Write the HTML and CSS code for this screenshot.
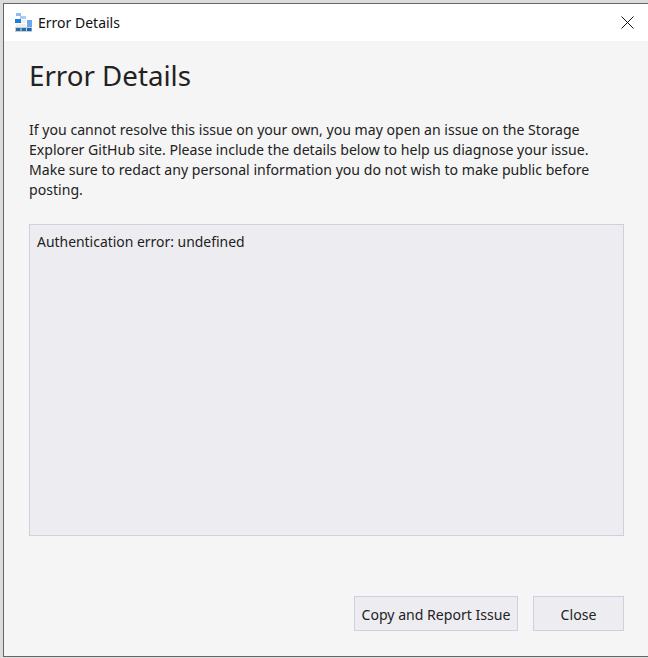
FILE: index.html
```html
<!DOCTYPE html>
<html lang="en">
<head>
<meta charset="utf-8">
<title>Error Details</title>
<link rel="stylesheet" href="styles.css">
</head>
<body>
<div class="window">
  <header class="titlebar">
    <svg class="app-icon" width="18" height="19" viewBox="0 0 18 19" aria-hidden="true">
      <rect x="1" y="0" width="5" height="3" fill="#8dbdf5"/>
      <rect x="5" y="3" width="6" height="3" fill="#a9cdf7"/>
      <rect x="0" y="6" width="6" height="4" fill="#1a7fe0"/>
      <rect x="6" y="7" width="5" height="3" fill="#eeeeee"/>
      <rect x="12" y="7" width="5" height="3" fill="#6aa8ee"/>
      <rect x="1" y="11" width="5" height="3" fill="#eeeeee"/>
      <rect x="6" y="11" width="5" height="3" fill="#eeeeee"/>
      <rect x="12" y="10" width="5" height="4" fill="#6aa8ee"/>
      <rect x="0" y="14" width="17" height="5" fill="#c9ced4"/>
      <rect x="1" y="15" width="4.500" height="3" fill="#2a6ea8"/>
      <rect x="6.500" y="15" width="4.500" height="3" fill="#2a6ea8"/>
      <rect x="12" y="15" width="4.500" height="3" fill="#1266ad"/>
    </svg>
    <span class="title-text">Error Details</span>
    <svg class="close-icon" width="13" height="13" viewBox="0 0 13 13" aria-hidden="true">
      <path d="M0.500 0.500L12.500 12.500M12.500 0.500L0.500 12.500" stroke="#111" stroke-width="1" fill="none"/>
    </svg>
  </header>
  <main class="content">
    <h1 class="heading">Error Details</h1>
    <p class="intro">If you cannot resolve this issue on your own, you may open an issue on the Storage Explorer GitHub site. Please include the details below to help us diagnose your issue. Make sure to redact any personal information you do not wish to make public before posting.</p>
    <div class="details">Authentication error: undefined</div>
    <div class="actions">
      <button class="btn btn-report" type="button">Copy and Report Issue</button>
      <button class="btn btn-close" type="button">Close</button>
    </div>
  </main>
</div>
</body>
</html>
```
FILE: styles.css
```css
* {
  box-sizing: border-box;
}

html,
body {
  margin: 0;
  height: 658px;
  overflow: hidden;
}

body {
  background: #dcdcdc;
  padding: 3px 0 1px 3px;
  font-family: "Noto Sans", "Open Sans", sans-serif;
  color: #222;
}

.window {
  display: flex;
  flex-direction: column;
  height: 654px;
  background: #f5f5f5;
  border: 1px solid #666;
  border-right: 0;
}

.titlebar {
  display: flex;
  align-items: center;
  flex: 0 0 37px;
  padding: 0 14px 0 11px;
  background: #fff;
}

.app-icon {
  flex: none;
  margin-right: 5px;
}

.title-text {
  font-size: 14px;
  color: #111;
}

.close-icon {
  margin-left: auto;
}

.content {
  display: flex;
  flex: 1;
  flex-direction: column;
  padding: 0 24px 25px 25px;
}

.heading {
  margin: 14px 0 0;
  font-size: 27.700px;
  font-weight: 400;
  line-height: 40px;
  color: #222;
}

.intro {
  margin: 25px 0 0;
  font-size: 14.100px;
  line-height: 20px;
}

.details {
  height: 312px;
  margin-top: 24px;
  padding: 7px 7px;
  background: #ededf1;
  border: 1px solid #cfcfdf;
  font-size: 13.930px;
  line-height: 20px;
}

.actions {
  display: flex;
  justify-content: flex-end;
  gap: 15px;
  margin-top: auto;
}

.btn {
  height: 35px;
  padding: 2px 0 0;
  background: #ededf1;
  border: 1px solid #cfcfdf;
  font: inherit;
  font-size: 14.100px;
  color: #222;
}

.btn-report {
  width: 164px;
}

.btn-close {
  width: 91px;
}
```
